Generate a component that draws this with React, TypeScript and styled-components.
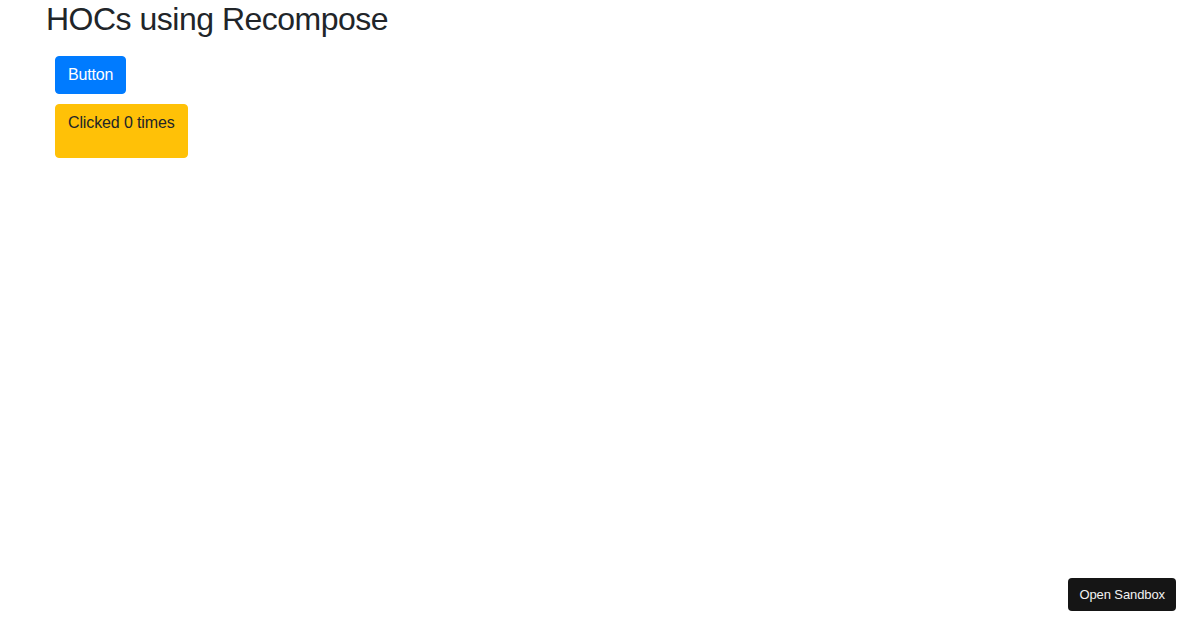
import { useState } from "react";
import styled, { createGlobalStyle } from "styled-components";

const GlobalStyle = createGlobalStyle`
  html, body {
    margin: 0;
    padding: 0;
    background: #fff;
  }
  body {
    font-family: "Liberation Sans", Arial, Helvetica, sans-serif;
    color: #212529;
    font-size: 16px;
    line-height: 1.5;
  }
`;

const Page = styled.div`
  padding: 0 44px;
`;

const Title = styled.h2`
  margin: 0 0 8px 2px;
  font-size: 32px;
  font-weight: 400;
  line-height: 1.2;
  letter-spacing: -0.5px;
`;

const Demo = styled.div`
  display: flex;
  flex-direction: column;
  align-items: flex-start;
  gap: 10px;
  padding: 10px 11px;
`;

const Button = styled.button`
  font-family: inherit;
  font-size: 16px;
  line-height: 1.5;
  letter-spacing: -0.15px;
  color: #fff;
  background-color: #007bff;
  border: 1px solid #007bff;
  border-radius: 4px;
  padding: 6px 12px;
  cursor: pointer;
`;

const Counter = styled.div`
  background-color: #ffc107;
  border: 1px solid #ffc107;
  border-radius: 4px;
  padding: 6px 12px;
  letter-spacing: -0.13px;

  p {
    margin: 0 0 16px;
  }
`;

const SandboxLink = styled.a`
  position: fixed;
  right: 24px;
  bottom: 19px;
  background: #151515;
  color: #f2f2f2;
  font-family: "Liberation Sans", Arial, sans-serif;
  font-size: 13px;
  line-height: 15px;
  letter-spacing: -0.1px;
  padding: 9px 11px;
  border-radius: 4px;
  text-decoration: none;
`;

function App() {
  const [count, setCount] = useState(0);
  return (
    <>
      <GlobalStyle />
      <Page>
        <Title>HOCs using Recompose</Title>
        <Demo>
          <Button onClick={() => setCount(count + 1)}>Button</Button>
          <Counter>
            <p>Clicked {count} times</p>
          </Counter>
        </Demo>
      </Page>
      <SandboxLink href="#">Open Sandbox</SandboxLink>
    </>
  );
}

export default App;
